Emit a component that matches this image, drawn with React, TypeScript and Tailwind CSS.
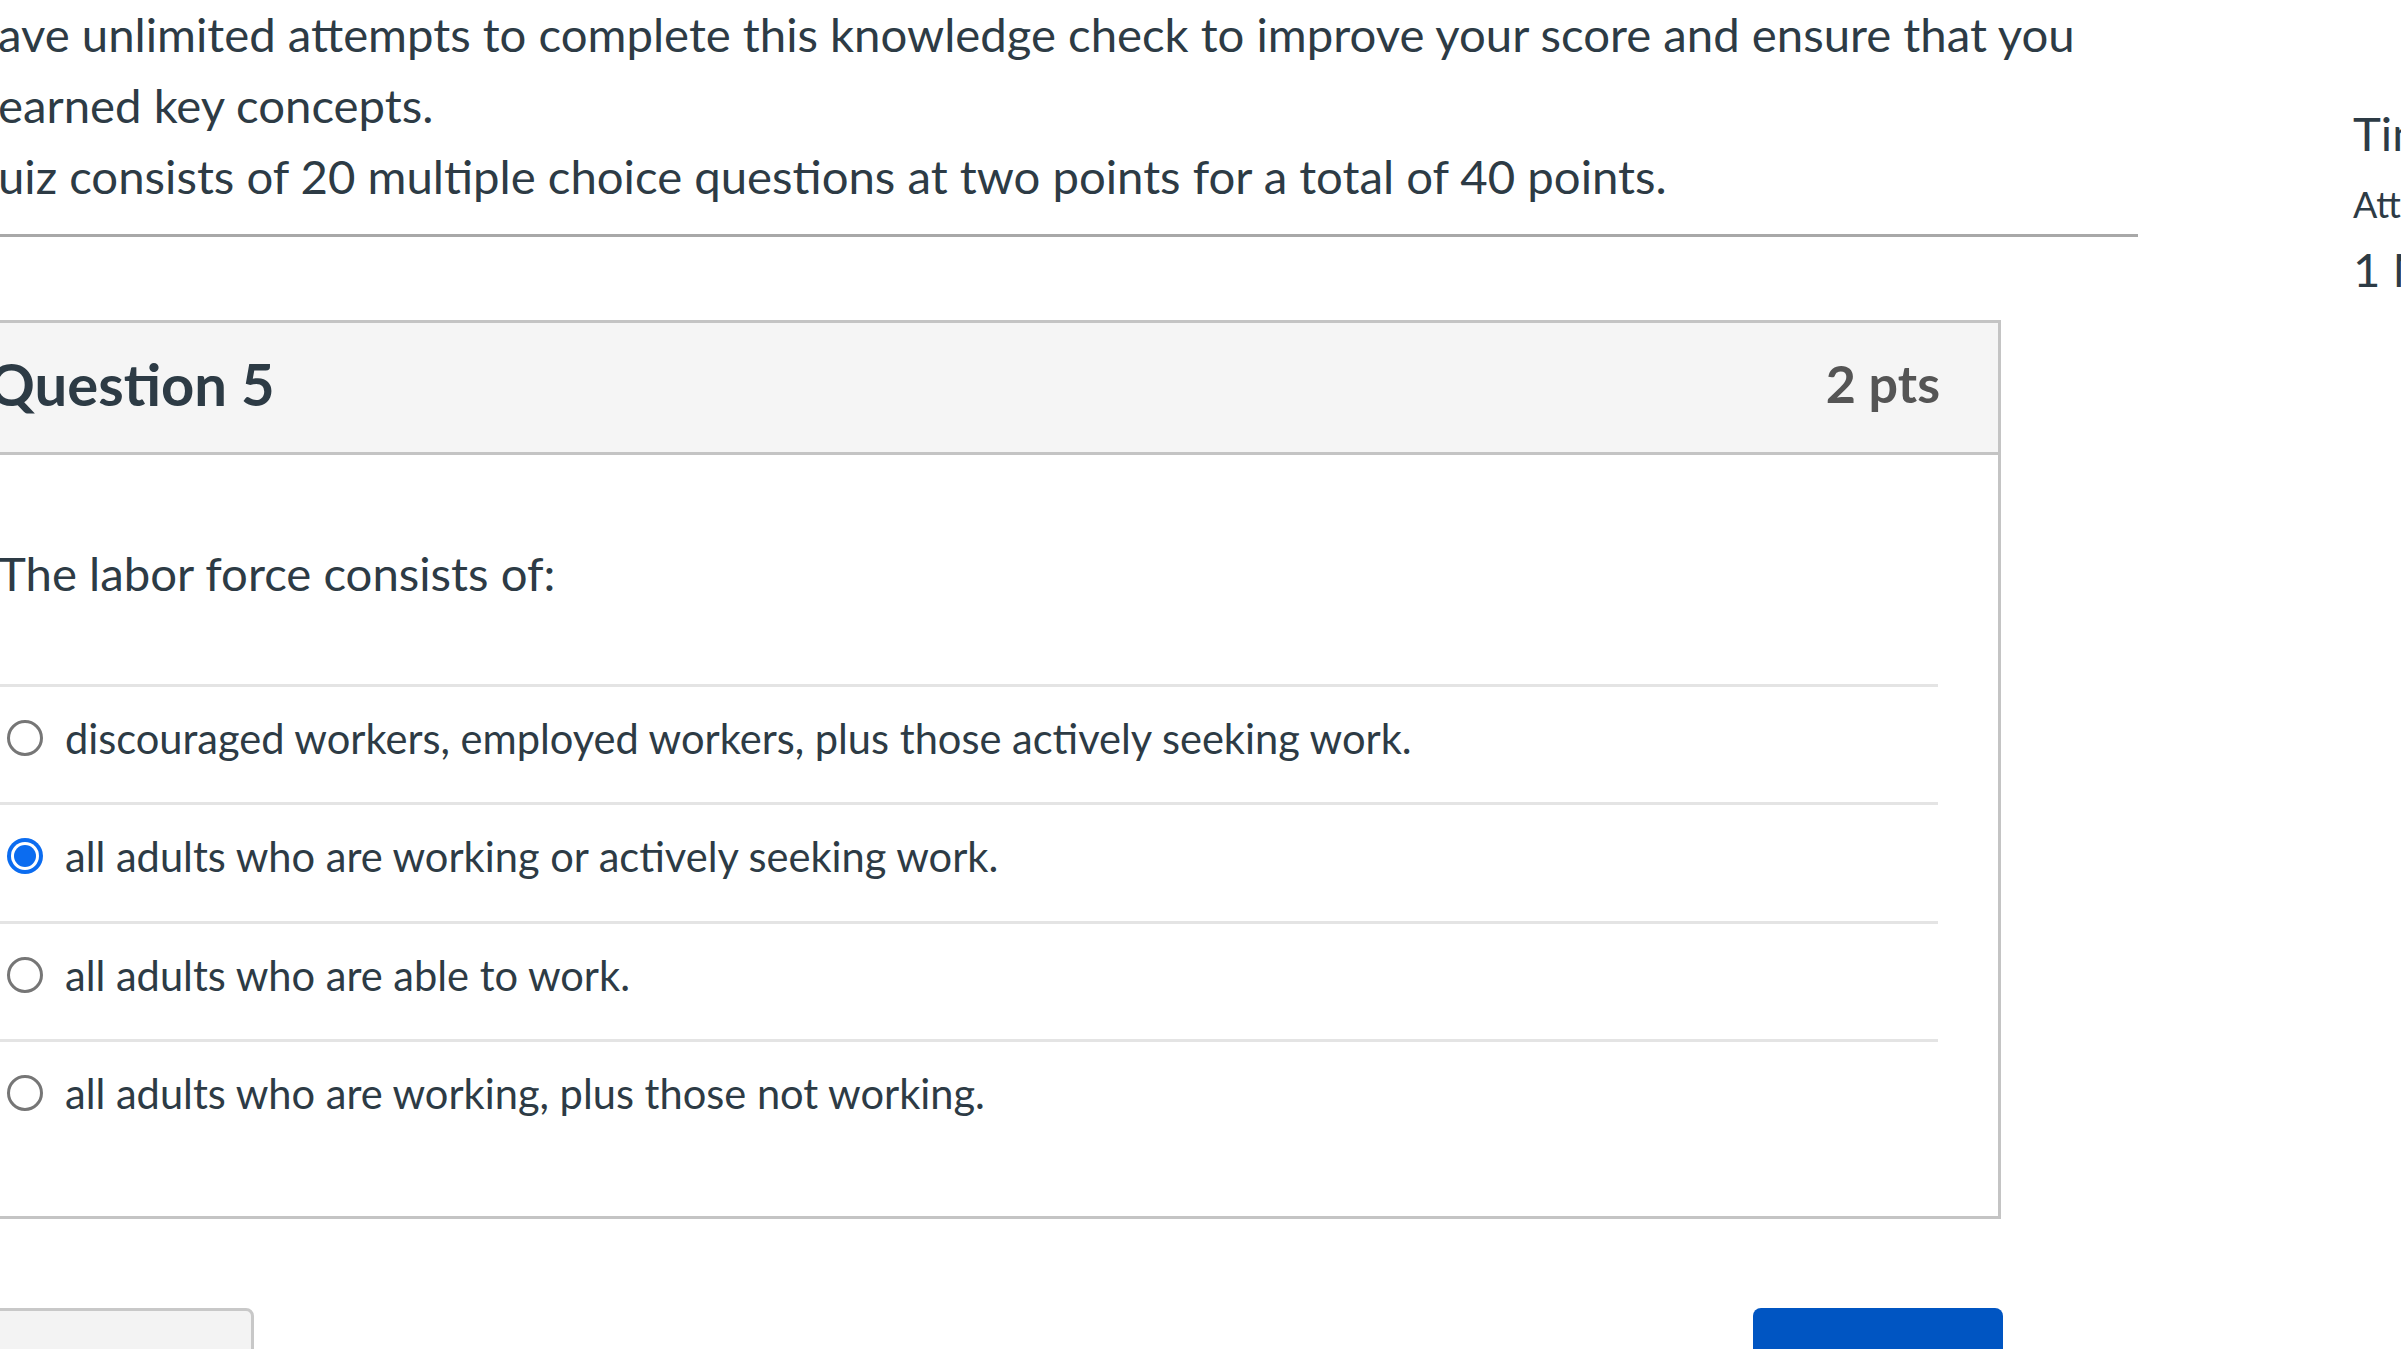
import { useState } from 'react';

const answers = [
  'discouraged workers, employed workers, plus those actively seeking work.',
  'all adults who are working or actively seeking work.',
  'all adults who are able to work.',
  'all adults who are working, plus those not working.',
];

function Radio({ checked }: { checked: boolean }) {
  if (checked) {
    return (
      <span className="flex h-[36px] w-[36px] shrink-0 items-center justify-center rounded-full bg-[#0b6cf0]">
        <span className="flex h-[28px] w-[28px] items-center justify-center rounded-full bg-white">
          <span className="h-[22px] w-[22px] rounded-full bg-[#0b6cf0]" />
        </span>
      </span>
    );
  }
  return <span className="h-[36px] w-[36px] shrink-0 rounded-full border-[3px] border-[#767676] bg-white" />;
}

export default function App() {
  const [selected, setSelected] = useState(1);

  return (
    <div className="flex h-[1349px] w-[2401px] overflow-hidden bg-white font-['Lato','Liberation_Sans',sans-serif] text-[#2d3b45]">
      {/* Quiz column */}
      <main className="w-[2138px] shrink-0">
        <div className="mt-[-1px] text-[47.3px] leading-[1.5]">
          <p className="ml-[-2px]">ave unlimited attempts to complete this knowledge check to improve your score and ensure that you</p>
          <p className="ml-[-2px]">earned key concepts.</p>
          <p className="ml-[-2px]">uiz consists of 20 multiple choice questions at two points for a total of 40 points.</p>
        </div>
        <div className="mt-[22px] h-[3px] w-full bg-[#a8a8a8]" />

        {/* Question card */}
        <section className="ml-[-50px] mt-[83px] w-[2051px] border-[3px] border-[#c4c4c4]">
          <div className="flex h-[132px] items-center justify-between border-b-[3px] border-[#c4c4c4] bg-[#f5f5f5] pb-[8px] pl-[35px] pr-[58px]">
            <h2 className="text-[58px] font-bold leading-[1.3] text-[#2d3b45]">Question 5</h2>
            <span className="text-[52px] font-bold leading-[1.3] text-[#555]">2 pts</span>
          </div>
          <div className="pb-[58px] pl-[45px] pr-[60px] pt-[83px]">
            <p className="text-[47.3px] leading-[1.5]">The labor force consists of:</p>
            <div className="mt-[75px]">
              {answers.map((a, i) => (
                <label
                  key={i}
                  onClick={() => setSelected(i)}
                  className="flex h-[118.5px] cursor-pointer items-start gap-[22px] border-t-[3px] border-[#e4e4e4] pl-[9px] pt-[20px]"
                >
                  <span className="flex h-[62px] items-center">
                    <Radio checked={selected === i} />
                  </span>
                  <span className="text-[41.6px] leading-[62px]">{a}</span>
                </label>
              ))}
            </div>
          </div>
        </section>

        {/* Nav buttons */}
        <div className="ml-[-50px] mt-[89px] flex w-[2053px] items-start justify-between">
          <button className="h-[110px] w-[304px] rounded-[8px] border-[3px] border-[#c8c8c8] bg-[#f3f3f3] pl-[60px] pt-[12px] text-left text-[47.3px] leading-[1.5] text-[#2d3b45]">
            Previous
          </button>
          <button className="h-[110px] w-[250px] rounded-[8px] bg-[#0055c2] pt-[15px] text-[47.3px] leading-[1.5] text-white">
            Next
          </button>
        </div>
      </main>

      {/* Side panel */}
      <aside className="ml-[215px] shrink-0 whitespace-nowrap pt-[97px]">
        <p className="text-[47.3px] leading-[72px]">Time Running:</p>
        <p className="mt-[8px] text-[36px] leading-[54px]">Attempt due: Feb 9 at 11:59pm</p>
        <p className="mt-[2px] text-[47.3px] leading-[72px]">1 Minute, 42 Seconds</p>
      </aside>
    </div>
  );
}
